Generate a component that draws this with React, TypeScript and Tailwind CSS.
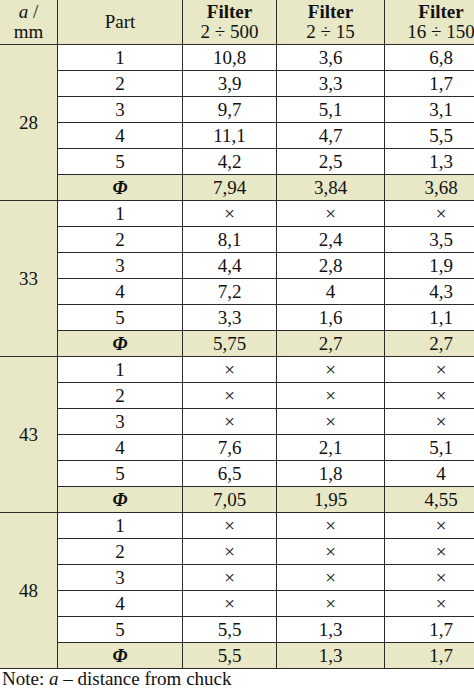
const groups = [
  {
    a: "28",
    rows: [
      ["1", "10,8", "3,6", "6,8"],
      ["2", "3,9", "3,3", "1,7"],
      ["3", "9,7", "5,1", "3,1"],
      ["4", "11,1", "4,7", "5,5"],
      ["5", "4,2", "2,5", "1,3"],
    ],
    phi: ["7,94", "3,84", "3,68"],
  },
  {
    a: "33",
    rows: [
      ["1", "×", "×", "×"],
      ["2", "8,1", "2,4", "3,5"],
      ["3", "4,4", "2,8", "1,9"],
      ["4", "7,2", "4", "4,3"],
      ["5", "3,3", "1,6", "1,1"],
    ],
    phi: ["5,75", "2,7", "2,7"],
  },
  {
    a: "43",
    rows: [
      ["1", "×", "×", "×"],
      ["2", "×", "×", "×"],
      ["3", "×", "×", "×"],
      ["4", "7,6", "2,1", "5,1"],
      ["5", "6,5", "1,8", "4"],
    ],
    phi: ["7,05", "1,95", "4,55"],
  },
  {
    a: "48",
    rows: [
      ["1", "×", "×", "×"],
      ["2", "×", "×", "×"],
      ["3", "×", "×", "×"],
      ["4", "×", "×", "×"],
      ["5", "5,5", "1,3", "1,7"],
    ],
    phi: ["5,5", "1,3", "1,7"],
  },
];

const cell = "border-[1.5px] border-[#2b2b2b] text-center p-0 leading-[20px]";

export default function App() {
  return (
    <div className="w-[474px] h-[690px] overflow-hidden bg-white text-[#111] [font-family:'Liberation_Serif',serif]">
      <table className="w-[498px] border-collapse table-fixed text-[19px] -mt-px -ml-px">
        <colgroup>
          <col className="w-[58px]" />
          <col className="w-[125px]" />
          <col className="w-[94px]" />
          <col className="w-[108px]" />
          <col className="w-[113px]" />
        </colgroup>
        <thead>
          <tr className="h-[45px] bg-[#e8e8c6]">
            <th className={`${cell} font-normal`}>
              <i>a</i> /<br />mm
            </th>
            <th className={`${cell} font-normal`}>Part</th>
            <th className={`${cell} font-normal`}>
              <b>Filter</b>
              <br />2 ÷ 500
            </th>
            <th className={`${cell} font-normal`}>
              <b>Filter</b>
              <br />2 ÷ 15
            </th>
            <th className={`${cell} font-normal whitespace-nowrap`}>
              <b>Filter</b>
              <br />16 ÷ 150
            </th>
          </tr>
        </thead>
        <tbody>
          {groups.map((g) => (
            <>
              {g.rows.map((r, i) => (
                <tr key={g.a + i} className="h-[26px]">
                  {i === 0 && (
                    <td rowSpan={6} className={`${cell} bg-[#e8e8c6]`}>
                      {g.a}
                    </td>
                  )}
                  {r.map((v, j) => (
                    <td key={j} className={cell}>
                      {v}
                    </td>
                  ))}
                </tr>
              ))}
              <tr key={g.a + "phi"} className="h-[26px] bg-[#e8e8c6]">
                <td className={`${cell} font-bold italic`}>Φ</td>
                {g.phi.map((v, j) => (
                  <td key={j} className={cell}>
                    {v}
                  </td>
                ))}
              </tr>
            </>
          ))}
        </tbody>
      </table>
      <p className="pl-[2px] text-[19px] leading-[20px]">
        Note: <i>a</i> – distance from chuck
      </p>
    </div>
  );
}
